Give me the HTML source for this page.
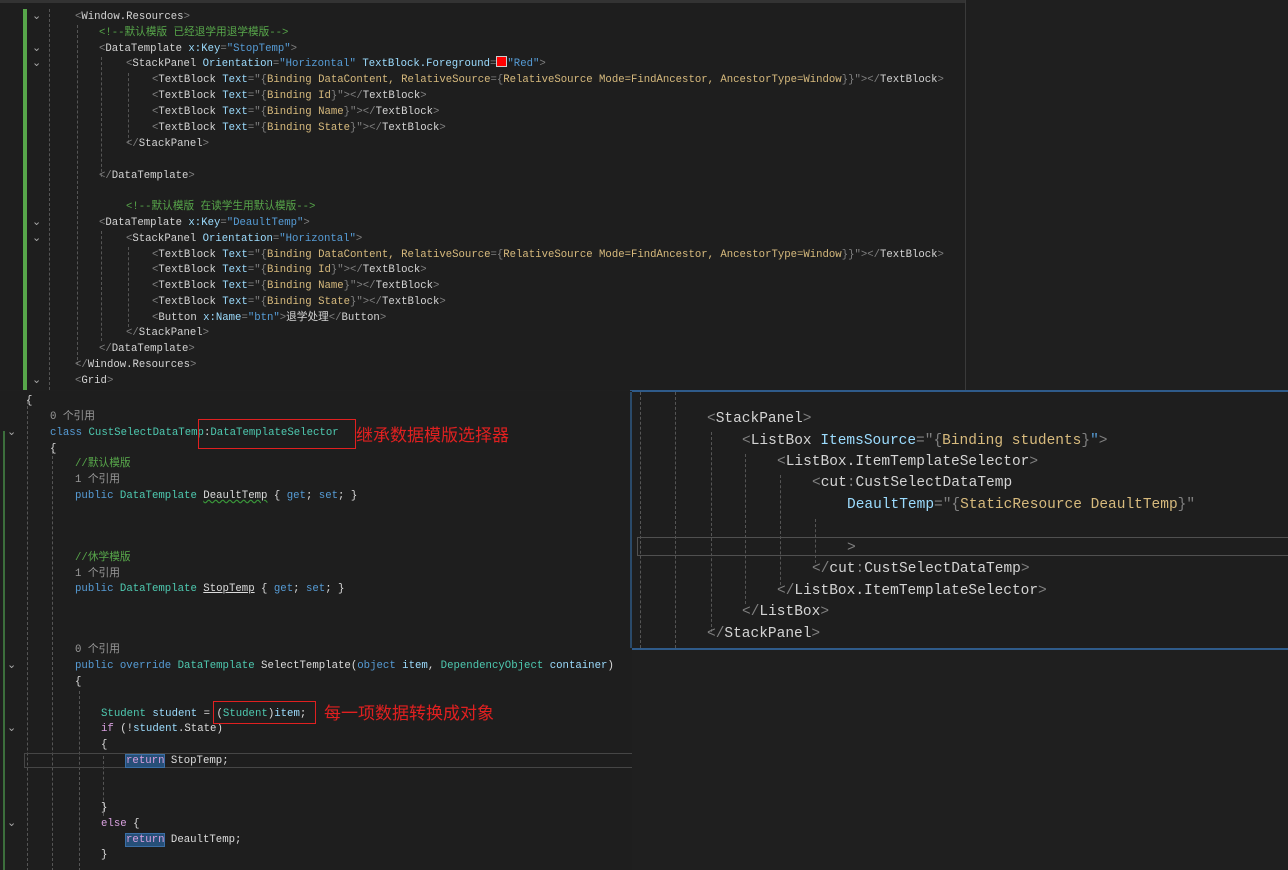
<!DOCTYPE html>
<html><head><meta charset="utf-8"><style>
body{margin:0;width:1288px;height:870px;background:#1f1f1f;overflow:hidden;position:relative;font-family:"Liberation Mono","Noto Sans CJK SC",monospace;}
.pn{position:absolute;background:#1e1e1e;overflow:hidden}
.l{position:absolute;white-space:pre;line-height:16px}
.t .l{font-size:10.65px}
.b .l{font-size:10.7px}
.r .l{font-size:14.5px;line-height:20px}
.p{color:#808080}.e{color:#d4d4d4}.a{color:#9cdcfe}.v{color:#569cd6}.m{color:#d7ba7d}.c{color:#57a64a}
.k{color:#569cd6}.ty{color:#4ec9b0}.id{color:#dcdcdc}.cl{color:#999}.pu{color:#d8a0df}
.g{position:absolute;border-left:1px dashed #555;width:0}
.ch{position:absolute;color:#aaa;font-size:11px;font-family:"DejaVu Sans",sans-serif}
.rb{position:absolute;border:1.5px solid #e02020}
.an{position:absolute;color:#e02020;font-family:"Noto Sans CJK SC",sans-serif;font-size:17px;white-space:pre}
.hl{background:#264f78;outline:1px solid #3a6ea5}
</style></head><body>

<div class="pn t" style="left:0;top:0;width:965px;height:390px;border-right:1px solid #3a3a3a">
<div style="position:absolute;left:0;top:0;width:965px;height:3px;background:#333"></div>
<div style="position:absolute;left:23px;top:9px;width:4px;height:381px;background:#57a64a"></div>
<div class="g" style="left:49px;top:9px;height:381px"></div>
<div class="g" style="left:77px;top:25px;height:340px"></div>
<div class="g" style="left:101px;top:57px;height:120px"></div>
<div class="g" style="left:101px;top:231px;height:110px"></div>
<div class="g" style="left:128px;top:73px;height:70px"></div>
<div class="g" style="left:128px;top:247px;height:80px"></div>
<div class="ch" style="left:32px;top:9px">⌄</div><div class="ch" style="left:32px;top:41px">⌄</div><div class="ch" style="left:32px;top:56px">⌄</div>
<div class="ch" style="left:32px;top:215px">⌄</div><div class="ch" style="left:32px;top:231px">⌄</div><div class="ch" style="left:32px;top:373px">⌄</div>
<div class="l" style="left:75px;top:9px"><span class="p">&lt;</span><span class="e">Window.Resources</span><span class="p">&gt;</span></div>
<div class="l" style="left:99px;top:25px"><span class="c">&lt;!--默认模版 已经退学用退学模版--&gt;</span></div>
<div class="l" style="left:99px;top:41px"><span class="p">&lt;</span><span class="e">DataTemplate</span> <span class="a">x:Key</span><span class="p">=</span><span class="v">"StopTemp"</span><span class="p">&gt;</span></div>
<div class="l" style="left:126px;top:56px"><span class="p">&lt;</span><span class="e">StackPanel</span> <span class="a">Orientation</span><span class="p">=</span><span class="v">"Horizontal"</span> <span class="a">TextBlock.Foreground</span><span class="p">=</span><span style="display:inline-block;width:9px;height:9px;background:#f00;border:1px solid #ccc;vertical-align:-1px"></span><span class="v">"Red"</span><span class="p">&gt;</span></div>
<div class="l" style="left:152px;top:72px"><span class="p">&lt;</span><span class="e">TextBlock</span> <span class="a">Text</span><span class="p">="{</span><span class="m">Binding DataContent, RelativeSource</span><span class="p">={</span><span class="m">RelativeSource Mode=FindAncestor, AncestorType=Window</span><span class="p">}}"&gt;&lt;/</span><span class="e">TextBlock</span><span class="p">&gt;</span></div>
<div class="l" style="left:152px;top:88px"><span class="p">&lt;</span><span class="e">TextBlock</span> <span class="a">Text</span><span class="p">="{</span><span class="m">Binding Id</span><span class="p">}"&gt;&lt;/</span><span class="e">TextBlock</span><span class="p">&gt;</span></div>
<div class="l" style="left:152px;top:104px"><span class="p">&lt;</span><span class="e">TextBlock</span> <span class="a">Text</span><span class="p">="{</span><span class="m">Binding Name</span><span class="p">}"&gt;&lt;/</span><span class="e">TextBlock</span><span class="p">&gt;</span></div>
<div class="l" style="left:152px;top:120px"><span class="p">&lt;</span><span class="e">TextBlock</span> <span class="a">Text</span><span class="p">="{</span><span class="m">Binding State</span><span class="p">}"&gt;&lt;/</span><span class="e">TextBlock</span><span class="p">&gt;</span></div>
<div class="l" style="left:126px;top:136px"><span class="p">&lt;/</span><span class="e">StackPanel</span><span class="p">&gt;</span></div>
<div class="l" style="left:99px;top:168px"><span class="p">&lt;/</span><span class="e">DataTemplate</span><span class="p">&gt;</span></div>
<div class="l" style="left:126px;top:199px"><span class="c">&lt;!--默认模版 在读学生用默认模版--&gt;</span></div>
<div class="l" style="left:99px;top:215px"><span class="p">&lt;</span><span class="e">DataTemplate</span> <span class="a">x:Key</span><span class="p">=</span><span class="v">"DeaultTemp"</span><span class="p">&gt;</span></div>
<div class="l" style="left:126px;top:231px"><span class="p">&lt;</span><span class="e">StackPanel</span> <span class="a">Orientation</span><span class="p">=</span><span class="v">"Horizontal"</span><span class="p">&gt;</span></div>
<div class="l" style="left:152px;top:247px"><span class="p">&lt;</span><span class="e">TextBlock</span> <span class="a">Text</span><span class="p">="{</span><span class="m">Binding DataContent, RelativeSource</span><span class="p">={</span><span class="m">RelativeSource Mode=FindAncestor, AncestorType=Window</span><span class="p">}}"&gt;&lt;/</span><span class="e">TextBlock</span><span class="p">&gt;</span></div>
<div class="l" style="left:152px;top:262px"><span class="p">&lt;</span><span class="e">TextBlock</span> <span class="a">Text</span><span class="p">="{</span><span class="m">Binding Id</span><span class="p">}"&gt;&lt;/</span><span class="e">TextBlock</span><span class="p">&gt;</span></div>
<div class="l" style="left:152px;top:278px"><span class="p">&lt;</span><span class="e">TextBlock</span> <span class="a">Text</span><span class="p">="{</span><span class="m">Binding Name</span><span class="p">}"&gt;&lt;/</span><span class="e">TextBlock</span><span class="p">&gt;</span></div>
<div class="l" style="left:152px;top:294px"><span class="p">&lt;</span><span class="e">TextBlock</span> <span class="a">Text</span><span class="p">="{</span><span class="m">Binding State</span><span class="p">}"&gt;&lt;/</span><span class="e">TextBlock</span><span class="p">&gt;</span></div>
<div class="l" style="left:152px;top:310px"><span class="p">&lt;</span><span class="e">Button</span> <span class="a">x:Name</span><span class="p">=</span><span class="v">"btn"</span><span class="p">&gt;</span><span class="e">退学处理</span><span class="p">&lt;/</span><span class="e">Button</span><span class="p">&gt;</span></div>
<div class="l" style="left:126px;top:325px"><span class="p">&lt;/</span><span class="e">StackPanel</span><span class="p">&gt;</span></div>
<div class="l" style="left:99px;top:341px"><span class="p">&lt;/</span><span class="e">DataTemplate</span><span class="p">&gt;</span></div>
<div class="l" style="left:75px;top:357px"><span class="p">&lt;/</span><span class="e">Window.Resources</span><span class="p">&gt;</span></div>
<div class="l" style="left:75px;top:373px"><span class="p">&lt;</span><span class="e">Grid</span><span class="p">&gt;</span></div>
</div>

<div style="position:absolute;left:630px;top:390px;width:658px;height:2px;background:#2f5b8a"></div>

<div class="pn b" style="left:0;top:391px;width:632px;height:479px">
<div style="position:absolute;left:3px;top:40px;width:2px;height:439px;background:#3c6e3c"></div>
<div class="g" style="left:27px;top:10px;height:470px"></div>
<div class="g" style="left:52px;top:60px;height:420px"></div>
<div class="g" style="left:79px;top:300px;height:180px"></div>
<div class="g" style="left:103px;top:365px;height:60px"></div>
<div class="ch" style="left:7px;top:34px">⌄</div><div class="ch" style="left:7px;top:267px">⌄</div><div class="ch" style="left:7px;top:330px">⌄</div><div class="ch" style="left:7px;top:425px">⌄</div>
<div style="position:absolute;left:24px;top:362px;width:610px;height:13px;border:1px solid #464646"></div>
<div class="l" style="left:26px;top:2px"><span class="id">{</span></div>
<div class="l" style="left:50px;top:18px"><span class="cl">0 个引用</span></div>
<div class="l" style="left:50px;top:34px"><span class="k">class</span> <span class="ty">CustSelectDataTemp</span><span class="id">:</span><span class="ty">DataTemplateSelector</span></div>
<div class="l" style="left:50px;top:50px"><span class="id">{</span></div>
<div class="l" style="left:75px;top:65px"><span class="c">//默认模版</span></div>
<div class="l" style="left:75px;top:81px"><span class="cl">1 个引用</span></div>
<div class="l" style="left:75px;top:97px"><span class="k">public</span> <span class="ty">DataTemplate</span> <span class="id" style="text-decoration:underline wavy #3a9a3a">DeaultTemp</span> <span class="id">{</span> <span class="k">get</span><span class="id">;</span> <span class="k">set</span><span class="id">; }</span></div>
<div class="l" style="left:75px;top:159px"><span class="c">//休学模版</span></div>
<div class="l" style="left:75px;top:175px"><span class="cl">1 个引用</span></div>
<div class="l" style="left:75px;top:190px"><span class="k">public</span> <span class="ty">DataTemplate</span> <span class="id" style="text-decoration:underline">StopTemp</span> <span class="id">{</span> <span class="k">get</span><span class="id">;</span> <span class="k">set</span><span class="id">; }</span></div>
<div class="l" style="left:75px;top:251px"><span class="cl">0 个引用</span></div>
<div class="l" style="left:75px;top:267px"><span class="k">public override</span> <span class="ty">DataTemplate</span> <span class="id">SelectTemplate(</span><span class="k">object</span> <span class="a">item</span><span class="id">,</span> <span class="ty">DependencyObject</span> <span class="a">container</span><span class="id">)</span></div>
<div class="l" style="left:75px;top:283px"><span class="id">{</span></div>
<div class="l" style="left:101px;top:315px"><span class="ty">Student</span> <span class="a">student</span> <span class="id">= (</span><span class="ty">Student</span><span class="id">)</span><span class="a">item</span><span class="id">;</span></div>
<div class="l" style="left:101px;top:330px"><span class="pu">if</span> <span class="id">(!</span><span class="a">student</span><span class="id">.State)</span></div>
<div class="l" style="left:101px;top:346px"><span class="id">{</span></div>
<div class="l" style="left:126px;top:362px"><span class="pu hl">return</span> <span class="id">StopTemp;</span></div>
<div class="l" style="left:101px;top:409px"><span class="id">}</span></div>
<div class="l" style="left:101px;top:425px"><span class="pu">else</span> <span class="id">{</span></div>
<div class="l" style="left:126px;top:441px"><span class="pu hl">return</span> <span class="id">DeaultTemp;</span></div>
<div class="l" style="left:101px;top:456px"><span class="id">}</span></div>
</div>
<div class="rb" style="left:198px;top:419px;width:156px;height:28px"></div>
<div class="an" style="left:356px;top:421px">继承数据模版选择器</div>
<div class="rb" style="left:213px;top:701px;width:101px;height:21px"></div>
<div class="an" style="left:324px;top:699px">每一项数据转换成对象</div>

<div class="pn r" style="left:630px;top:392px;width:658px;height:256px;border-left:2px solid #2a4a6a">
<div class="g" style="left:8px;top:0;height:256px"></div>
<div class="g" style="left:43px;top:0;height:256px"></div>
<div class="g" style="left:79px;top:40px;height:200px"></div>
<div class="g" style="left:113px;top:62px;height:150px"></div>
<div class="g" style="left:148px;top:83px;height:110px"></div>
<div class="g" style="left:183px;top:127px;height:44px"></div>
<div style="position:absolute;left:5px;top:145px;width:660px;height:17px;border:1px solid #505050"></div>
<div class="l" style="left:75px;top:17px"><span class="p">&lt;</span><span class="e">StackPanel</span><span class="p">&gt;</span></div>
<div class="l" style="left:110px;top:39px"><span class="p">&lt;</span><span class="e">ListBox</span> <span class="a">ItemsSource</span><span class="p">="{</span><span class="m">Binding students</span><span class="p">}</span><span class="v">"</span><span class="p">&gt;</span></div>
<div class="l" style="left:145px;top:60px"><span class="p">&lt;</span><span class="e">ListBox.ItemTemplateSelector</span><span class="p">&gt;</span></div>
<div class="l" style="left:180px;top:81px"><span class="p">&lt;</span><span class="e">cut</span><span class="p">:</span><span class="e">CustSelectDataTemp</span></div>
<div class="l" style="left:215px;top:103px"><span class="a">DeaultTemp</span><span class="p">="{</span><span class="m">StaticResource DeaultTemp</span><span class="p">}"</span></div>
<div class="l" style="left:215px;top:146px"><span class="p">&gt;</span></div>
<div class="l" style="left:180px;top:167px"><span class="p">&lt;/</span><span class="e">cut</span><span class="p">:</span><span class="e">CustSelectDataTemp</span><span class="p">&gt;</span></div>
<div class="l" style="left:145px;top:189px"><span class="p">&lt;/</span><span class="e">ListBox.ItemTemplateSelector</span><span class="p">&gt;</span></div>
<div class="l" style="left:110px;top:210px"><span class="p">&lt;/</span><span class="e">ListBox</span><span class="p">&gt;</span></div>
<div class="l" style="left:75px;top:232px"><span class="p">&lt;/</span><span class="e">StackPanel</span><span class="p">&gt;</span></div>
</div>
<div style="position:absolute;left:632px;top:648px;width:656px;height:2px;background:#2f5b8a"></div>
</body></html>
